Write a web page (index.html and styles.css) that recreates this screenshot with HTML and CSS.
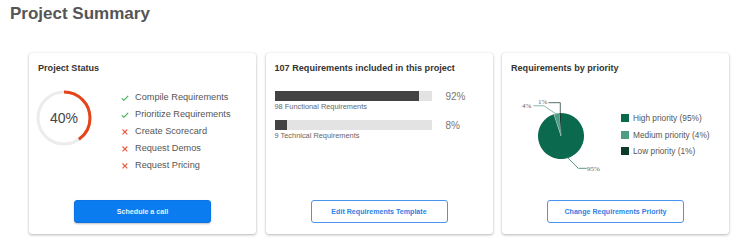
FILE: index.html
```html
<!DOCTYPE html>
<html lang="en">
<head>
<meta charset="utf-8">
<title>Project Summary</title>
<link rel="stylesheet" href="styles.css">
</head>
<body>
<h1 class="page-title">Project Summary</h1>
<div class="cards">
  <section class="card">
    <h2 class="card-title">Project Status</h2>
    <div class="card-body status-body">
      <svg class="ring" width="56" height="56" viewBox="0 0 56 56">
        <circle cx="28" cy="28" r="26" fill="none" stroke="#ececec" stroke-width="3"/>
        <circle cx="28" cy="28" r="26" fill="none" stroke="#e5441b" stroke-width="3" stroke-dasharray="65.35 200" transform="rotate(-90 28 28)"/>
        <text class="ring-text" x="28" y="33" text-anchor="middle">40%</text>
      </svg>
      <ul class="checklist">
        <li class="check-item"><svg class="ico" width="8" height="8" viewBox="0 0 8 8"><polyline points="0.8,4.3 2.9,6.3 7.2,1.8" fill="none" stroke="#3aab47" stroke-width="1.1"/></svg>Compile Requirements</li>
        <li class="check-item"><svg class="ico" width="8" height="8" viewBox="0 0 8 8"><polyline points="0.8,4.3 2.9,6.3 7.2,1.8" fill="none" stroke="#3aab47" stroke-width="1.1"/></svg>Prioritize Requirements</li>
        <li class="check-item"><svg class="ico" width="8" height="8" viewBox="0 0 8 8"><path d="M1.5 1.5 L6.3 6.3 M6.3 1.5 L1.5 6.3" stroke="#ea5a3c" stroke-width="1.1"/></svg>Create Scorecard</li>
        <li class="check-item"><svg class="ico" width="8" height="8" viewBox="0 0 8 8"><path d="M1.5 1.5 L6.3 6.3 M6.3 1.5 L1.5 6.3" stroke="#ea5a3c" stroke-width="1.1"/></svg>Request Demos</li>
        <li class="check-item"><svg class="ico" width="8" height="8" viewBox="0 0 8 8"><path d="M1.5 1.5 L6.3 6.3 M6.3 1.5 L1.5 6.3" stroke="#ea5a3c" stroke-width="1.1"/></svg>Request Pricing</li>
      </ul>
    </div>
    <div class="card-footer"><button class="btn btn-primary">Schedule a call</button></div>
  </section>

  <section class="card">
    <h2 class="card-title">107 Requirements included in this project</h2>
    <div class="card-body bars-body">
      <div class="bar-row">
        <div class="bar-col">
          <div class="track"><div class="fill" style="width:92%"></div></div>
          <div class="bar-label">98 Functional Requirements</div>
        </div>
        <div class="bar-pct">92%</div>
      </div>
      <div class="bar-row">
        <div class="bar-col">
          <div class="track"><div class="fill" style="width:8%"></div></div>
          <div class="bar-label">9 Technical Requirements</div>
        </div>
        <div class="bar-pct">8%</div>
      </div>
    </div>
    <div class="card-footer"><button class="btn btn-outline">Edit Requirements Template</button></div>
  </section>

  <section class="card">
    <h2 class="card-title">Requirements by priority</h2>
    <div class="card-body pie-body">
      <svg class="pie" width="100" height="80" viewBox="0 0 100 80">
        <path d="M50,40 L50,17 A23,23 0 1 1 42.893,18.126 Z" fill="#0b6a4d"/>
        <path d="M50,40 L42.893,18.126 A23,23 0 0 1 48.556,17.045 Z" fill="#4f9c85" stroke="#fff" stroke-width="0.3"/>
        <path d="M50,40 L48.556,17.045 A23,23 0 0 1 50,17 Z" fill="#0c3a2b"/>
        <polyline points="37.5,6.7 49.3,6.7 49.3,19" fill="none" stroke="#2b4a3f" stroke-width="0.8"/>
        <polyline points="22.5,9.8 33,9.8 45.7,18.5" fill="none" stroke="#6aa996" stroke-width="0.8"/>
        <polyline points="55.7,60.7 67.3,72.3 75.7,72.3" fill="none" stroke="#2e7d62" stroke-width="0.8"/>
        <text class="pie-label" x="27" y="7.6">1%</text>
        <text class="pie-label" x="11" y="12.4">4%</text>
        <text class="pie-label" x="76" y="74.8">95%</text>
      </svg>
      <ul class="legend">
        <li class="legend-item"><span class="swatch swatch-high"></span>High priority (95%)</li>
        <li class="legend-item"><span class="swatch swatch-med"></span>Medium priority (4%)</li>
        <li class="legend-item"><span class="swatch swatch-low"></span>Low priority (1%)</li>
      </ul>
    </div>
    <div class="card-footer"><button class="btn btn-outline">Change Requirements Priority</button></div>
  </section>
</div>
</body>
</html>
```

FILE: styles.css
```css
* { box-sizing: border-box; }
html, body { margin: 0; padding: 0; background: #fff; }
body {
  font-family: "Liberation Sans", Arial, Helvetica, sans-serif;
  color: #555;
  width: 750px;
  height: 238px;
  overflow: hidden;
}
.page-title {
  margin: 4px 0 0 10px;
  font-size: 17px;
  line-height: 19.5px;
  font-weight: bold;
  color: #555;
}
.cards {
  display: flex;
  gap: 9.5px;
  margin: 29.5px 0 0 29px;
}
.card {
  width: 227px;
  height: 181px;
  background: #fff;
  border-radius: 3px;
  box-shadow: 0 1px 3px rgba(0,0,0,0.28), 0 0 1px rgba(0,0,0,0.12);
  padding: 10px 9px 11px;
  display: flex;
  flex-direction: column;
}
.card-title {
  margin: 0;
  font-size: 9.1px;
  line-height: 11px;
  font-weight: bold;
  color: #333;
}
.card-body {
  margin-top: 16px;
  display: flex;
  align-items: flex-start;
}
.card-footer {
  margin-top: auto;
  display: flex;
  justify-content: center;
}
.btn {
  width: 137px;
  height: 23px;
  border-radius: 3px;
  font-family: "Liberation Sans", Arial, sans-serif;
  font-size: 7.1px;
  font-weight: bold;
  padding: 0;
  cursor: pointer;
}
.btn-primary {
  background: #0b7bf0;
  border: 1px solid #0a74e4;
  color: #e8f1fd;
  box-shadow: 0 1px 2px rgba(0,0,0,0.25);
}
.btn-outline {
  background: #fff;
  border: 1px solid #4a93ee;
  color: #2d7fe4;
}

/* status */
.ring { margin-left: -2px; flex: none; }
.ring-text {
  font-family: "Liberation Sans", Arial, sans-serif;
  font-size: 14px;
  fill: #444;
}
.checklist {
  list-style: none;
  margin: -1px 0 0 29px;
  padding: 0;
}
.check-item {
  display: flex;
  align-items: center;
  font-size: 9.2px;
  line-height: 17.1px;
  color: #555;
  white-space: nowrap;
}
.ico { flex: none; margin-right: 6px; }

/* bars */
.bars-body {
  flex-direction: column;
  gap: 9px;
  padding-top: 1px;
}
.bar-row {
  display: flex;
  align-items: flex-start;
  gap: 14px;
}
.bar-col { width: 157px; }
.track {
  height: 10px;
  background: #e3e3e3;
}
.fill {
  height: 100%;
  background: #434343;
}
.bar-label {
  margin-top: 1px;
  font-size: 7.4px;
  line-height: 9px;
  color: #666;
  white-space: nowrap;
}
.bar-pct {
  font-size: 10px;
  line-height: 12px;
  color: #777;
}

/* pie */
.pie-body { gap: 10px; }
.pie { flex: none; margin-top: 6px; }
.pie-label {
  font-family: "Liberation Serif", "Times New Roman", serif;
  font-size: 7px;
  fill: #666;
}
.legend {
  list-style: none;
  margin: 20px 0 0;
  padding: 0;
}
.legend-item {
  display: flex;
  align-items: center;
  font-size: 8.3px;
  line-height: 16.5px;
  color: #555;
  white-space: nowrap;
}
.swatch {
  width: 8px;
  height: 8px;
  margin-right: 4px;
  flex: none;
}
.swatch-high { background: #0b6a4d; }
.swatch-med { background: #4f9c85; }
.swatch-low { background: #0c3a2b; }
```
